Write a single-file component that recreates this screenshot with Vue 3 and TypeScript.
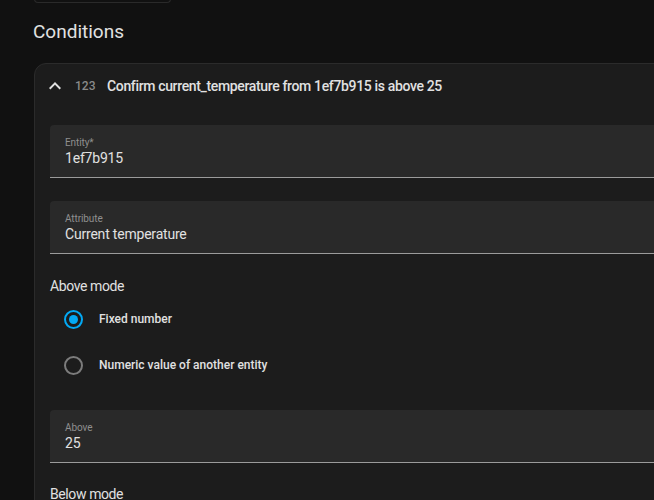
<script setup lang="ts">
interface Option { label: string; checked: boolean }
const options: Option[] = [
  { label: 'Fixed number', checked: true },
  { label: 'Numeric value of another entity', checked: false },
]
</script>

<template>
  <div class="page">
    <div class="prev"></div>
    <h2 class="heading">Conditions</h2>
    <section class="card">
      <header class="card-head">
        <svg class="chev" width="24" height="24" viewBox="0 0 24 24"><path d="M7.41 15.41 12 10.83l4.59 4.58L18 14l-6-6-6 6z" fill="#e1e1e1" /></svg>
        <span class="num">123</span>
        <span class="title">Confirm current_temperature from 1ef7b915 is above 25</span>
      </header>
      <div class="body">
        <div class="field">
          <span class="label">Entity*</span>
          <span class="value">1ef7b915</span>
        </div>
        <div class="field second">
          <span class="label">Attribute</span>
          <span class="value">Current temperature</span>
        </div>
        <div class="mode">Above mode</div>
        <div class="radios">
          <div v-for="o in options" :key="o.label" class="radio-row">
            <span class="radio" :class="{ on: o.checked }"></span>
            <span class="radio-label">{{ o.label }}</span>
          </div>
        </div>
        <div class="field third">
          <span class="label">Above</span>
          <span class="value">25</span>
        </div>
        <div class="mode below">Below mode</div>
      </div>
    </section>
  </div>
</template>

<style>
html, body { margin: 0; background: #111111; overflow: hidden; }
</style>

<style scoped>
.page {
  width: 654px;
  height: 500px;
  overflow: hidden;
  box-sizing: border-box;
  padding-left: 34px;
  background: #111111;
  font-family: Roboto, "Liberation Sans", sans-serif;
  color: #e1e1e1;
}
.prev {
  width: 137px;
  height: 4px;
  box-sizing: border-box;
  margin-top: -1px;
  border: 1px solid #2a2a2a;
  border-top: 0;
  border-radius: 0 0 4px 4px;
}
.heading {
  margin: 17px 0 0 -1px;
  height: 24px;
  font-size: 19px;
  line-height: 24px;
  font-weight: 400;
  color: #e1e1e1;
}
.card {
  margin-top: 19px;
  width: 700px;
  height: 520px;
  box-sizing: border-box;
  background: #1c1c1c;
  border: 1px solid #2b2b2b;
  border-radius: 12px;
}
.card-head {
  display: flex;
  align-items: center;
  height: 44px;
  padding-left: 8px;
}
.chev { flex: none; }
.num {
  margin-left: 8px;
  width: 32px;
  font-size: 12px;
  font-weight: 500;
  color: #8a8a8a;
}
.title {
  font-size: 14px;
  font-weight: 500;
  letter-spacing: -0.35px;
  color: #e1e1e1;
  white-space: nowrap;
}
.body { padding: 17px 0 0 15px; }
.field {
  display: flex;
  flex-direction: column;
  height: 53px;
  box-sizing: border-box;
  padding: 12px 15px 0;
  background: #292929;
  border-bottom: 1px solid #9b9b9b;
  border-radius: 4px 4px 0 0;
}
.second { margin-top: 23px; }
.third { margin-top: 22px; }
.label {
  font-size: 10px;
  line-height: 12px;
  letter-spacing: -0.1px;
  color: #8f8f8f;
}
.value {
  font-size: 14px;
  line-height: 19px;
  letter-spacing: -0.2px;
  color: #e1e1e1;
}
.mode {
  margin-top: 22px;
  font-size: 14px;
  line-height: 20px;
  letter-spacing: -0.4px;
  color: #e1e1e1;
}
.radios { margin-top: 0; }
.radio-row {
  display: flex;
  align-items: center;
  height: 46px;
  padding-left: 14px;
}
.radio {
  width: 19px;
  height: 19px;
  box-sizing: border-box;
  border: 2px solid #7c7c7c;
  border-radius: 50%;
  display: flex;
  align-items: center;
  justify-content: center;
}
.radio.on { border-color: #03a9f4; }
.radio.on::after {
  content: "";
  width: 9px;
  height: 9px;
  border-radius: 50%;
  background: #03a9f4;
}
.radio-label {
  margin-left: 16px;
  font-size: 12px;
  font-weight: 500;
  color: #e1e1e1;
}
.below { margin-top: 21px; }
</style>
